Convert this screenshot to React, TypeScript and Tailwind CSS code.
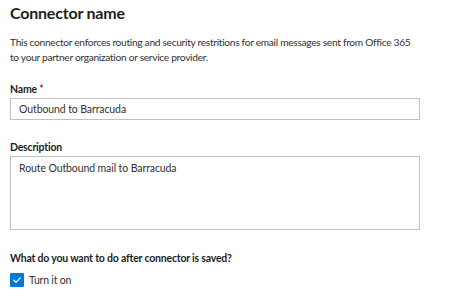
import React from 'react'

const App: React.FC = () => {
  return (
    <div
      className="w-[474px] h-[293px] overflow-hidden bg-white pl-[10px] tracking-[-0.2px] text-[#323130]"
      style={{ fontFamily: 'Lato, "Open Sans", sans-serif' }}
    >
      <h2 className="pt-[2px] text-[16px] font-bold leading-[22px] text-[#201f1e]">Connector name</h2>

      <p className="mt-[11px] w-[404px] text-[10.2px] leading-[15px] tracking-[-0.3px] text-[#323130]">
        This connector enforces routing and security restritions for email messages sent from Office 365 to your
        partner organization or service provider.
      </p>

      <div className="mt-[17px]">
        <label className="block text-[10.5px] font-bold leading-[14px] text-[#201f1e]">
          Name <span className="text-[#a4262c]">*</span>
        </label>
        <input
          readOnly
          value="Outbound to Barracuda"
          className="mt-[2px] block h-[22px] w-[410px] border border-[#c0c0c0] px-[8px] text-[10.5px] tracking-[-0.1px] text-[#323130] outline-none"
        />
      </div>

      <div className="mt-[20px]">
        <label className="block text-[10.5px] font-bold leading-[14px] text-[#201f1e]">Description</label>
        <textarea
          readOnly
          value="Route Outbound mail to Barracuda"
          className="mt-[2px] block h-[74px] w-[410px] resize-none border border-[#c0c0c0] px-[8px] py-[4px] text-[10.5px] leading-[14px] tracking-[-0.1px] text-[#323130] outline-none"
        />
      </div>

      <div className="mt-[21px] text-[10.5px] font-bold leading-[14px] text-[#201f1e]">
        What do you want to do after connector is saved?
      </div>

      <label className="mt-[8px] flex items-center gap-[5px]">
        <span className="flex h-[14px] w-[14px] items-center justify-center rounded-[1px] bg-[#0078d4]">
          <svg width="10" height="10" viewBox="0 0 10 10" fill="none">
            <path d="M1.8 5.2 L4 7.3 L8.3 2.8" stroke="white" strokeWidth="1.2" strokeLinecap="round" strokeLinejoin="round" />
          </svg>
        </span>
        <span className="text-[10.5px] leading-[14px] text-[#323130]">Turn it on</span>
      </label>
    </div>
  )
}

export default App
